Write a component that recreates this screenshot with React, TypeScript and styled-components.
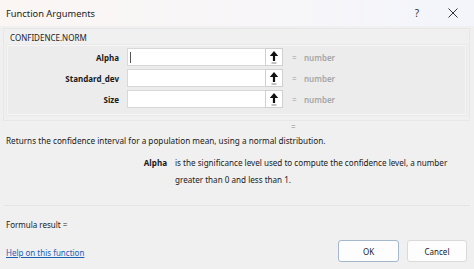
import React from "react";
import styled, { createGlobalStyle } from "styled-components";

const Global = createGlobalStyle`
  html, body { margin: 0; padding: 0; background: #f0f0f0; }
  body { font-family: "Noto Sans", "Open Sans", sans-serif; color: #1a1a1a; }
  * { box-sizing: border-box; }
`;

const Dialog = styled.div`
  width: 474px;
  height: 269px;
  display: flex;
  flex-direction: column;
  background: #f0f0f0;
  overflow: hidden;
`;

const TitleBar = styled.div`
  height: 26px;
  flex: none;
  display: flex;
  align-items: center;
  padding-left: 6px;
  padding-right: 16px;
  background: linear-gradient(90deg, #fbf6f4 0%, #f8f6f8 50%, #f3f5fb 100%);
  font-size: 9.3px;
  color: #1c1c1c;
`;

const TitleText = styled.span`
  flex: 1;
`;

const HelpGlyph = styled.span`
  font-size: 10px;
  color: #333;
  margin-right: 29px;
`;

const CloseIcon = () => (
  <svg width="10" height="10" viewBox="0 0 10 10">
    <path d="M0.5 0.5 L9.5 9.5 M9.5 0.5 L0.5 9.5" stroke="#333" strokeWidth="1" />
  </svg>
);

const Group = styled.div`
  margin: 2px 4px 0 3px;
  border: 1px solid #e7e7e7;
  padding-bottom: 5px;
  display: flex;
  flex-direction: column;
`;

const GroupLabel = styled.div`
  height: 16px;
  display: flex;
  align-items: center;
  padding-left: 6px;
  font-size: 8px;
  color: #222;
`;

const Panel = styled.div`
  margin: 0 3px;
  border: 1px solid #f6f6f6;
  box-shadow: 0 0 0 1px #e9e9e9;
  background: #ececec;
  padding: 2px 0 6px 0;
  display: flex;
  flex-direction: column;
  gap: 3px;
`;

const ArgRow = styled.div`
  height: 18px;
  display: flex;
  align-items: center;
`;

const ArgLabel = styled.div`
  width: 111px;
  text-align: right;
  font-weight: 700;
  font-size: 8px;
  color: #1a1a1a;
`;

const Field = styled.div`
  margin-left: 8px;
  width: 138px;
  height: 18px;
  background: #fff;
  border: 1px solid #d8d8d8;
  border-right: none;
  display: flex;
  align-items: center;
  padding-left: 2px;
`;

const Caret = styled.span`
  width: 1px;
  height: 11px;
  background: #555;
`;

const RefButton = styled.div`
  width: 18px;
  height: 18px;
  background: #fff;
  border: 1px solid #d0d0d0;
  display: flex;
  align-items: center;
  justify-content: center;
`;

const Equals = styled.span`
  margin-left: 9px;
  width: 12px;
  font-size: 8px;
  color: #9a9a9a;
`;

const Hint = styled.span`
  font-size: 8px;
  font-weight: 600;
  color: #a6a6a6;
`;

const ResultLine = styled.div`
  height: 11px;
  display: flex;
  align-items: center;
  padding-left: 291px;
  font-size: 8px;
  color: #8a8a8a;
`;

const Description = styled.div`
  height: 16px;
  display: flex;
  align-items: center;
  padding-left: 6px;
  font-size: 8.2px;
  color: #1a1a1a;
  white-space: nowrap;
`;

const ArgHelp = styled.div`
  display: grid;
  grid-template-columns: 167px 1fr;
  column-gap: 8px;
  margin-top: 6px;
  padding-right: 20px;
  font-size: 8.1px;
  line-height: 17px;
  color: #1a1a1a;
`;

const ArgHelpName = styled.div`
  text-align: right;
  font-weight: 700;
`;

const Separator = styled.div`
  margin: 17px 4px 0 4px;
  height: 1px;
  background: #e4e4e4;
`;

const FormulaResult = styled.div`
  height: 16px;
  margin-top: 10px;
  display: flex;
  align-items: center;
  padding-left: 6px;
  font-size: 8px;
  color: #1a1a1a;
`;

const Footer = styled.div`
  margin-top: 8px;
  height: 22px;
  display: flex;
  align-items: center;
  padding: 0 7px 0 6px;
`;

const HelpLink = styled.a`
  flex: 1;
  font-size: 8px;
  color: #1a5fb4;
  text-decoration: underline;
  margin-top: 2px;
`;

const Button = styled.button<{ $primary?: boolean }>`
  height: 22px;
  width: ${(p) => (p.$primary ? 61 : 60)}px;
  margin-left: ${(p) => (p.$primary ? 0 : 8)}px;
  background: #fdfdfd;
  border: 1px solid ${(p) => (p.$primary ? "#a3b8cc" : "#dadada")};
  border-radius: 3px;
  font-family: "Noto Sans", "Open Sans", sans-serif;
  font-size: 8px;
  color: #1a1a1a;
  padding: 0;
`;

const ArrowIcon = () => (
  <svg width="14" height="14" viewBox="0 0 14 14">
    <polygon points="7,1 2.8,6 5.9,6 5.9,11 8.1,11 8.1,6 11.2,6" fill="#111" />
    <line x1="4.5" y1="13" x2="9.5" y2="13" stroke="#777" strokeWidth="0.9" />
  </svg>
);

const args = [
  { name: "Alpha", focused: true },
  { name: "Standard_dev", focused: false },
  { name: "Size", focused: false },
];

export default function App() {
  return (
    <>
      <Global />
      <Dialog>
        <TitleBar>
          <TitleText>Function Arguments</TitleText>
          <HelpGlyph>?</HelpGlyph>
          <CloseIcon />
        </TitleBar>
        <Group>
          <GroupLabel>CONFIDENCE.NORM</GroupLabel>
          <Panel>
            {args.map((a) => (
              <ArgRow key={a.name}>
                <ArgLabel>{a.name}</ArgLabel>
                <Field>{a.focused && <Caret />}</Field>
                <RefButton>
                  <ArrowIcon />
                </RefButton>
                <Equals>=</Equals>
                <Hint>number</Hint>
              </ArgRow>
            ))}
          </Panel>
        </Group>
        <ResultLine>=</ResultLine>
        <Description>
          Returns the confidence interval for a population mean, using a normal distribution.
        </Description>
        <ArgHelp>
          <ArgHelpName>Alpha</ArgHelpName>
          <div>
            is the significance level used to compute the confidence level, a number greater
            than 0 and less than 1.
          </div>
        </ArgHelp>
        <Separator />
        <FormulaResult>Formula result =</FormulaResult>
        <Footer>
          <HelpLink href="#">Help on this function</HelpLink>
          <Button $primary>OK</Button>
          <Button>Cancel</Button>
        </Footer>
      </Dialog>
    </>
  );
}
